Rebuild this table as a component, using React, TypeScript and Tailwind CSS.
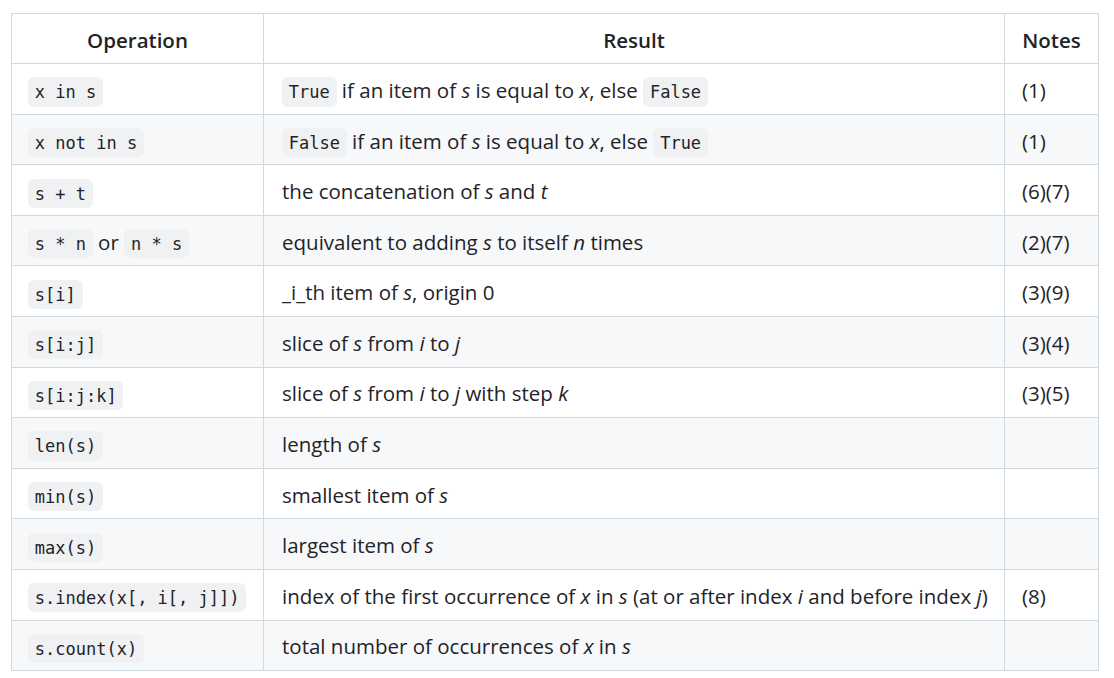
import React from 'react';

const C = ({ children }: { children: React.ReactNode }) => (
	<code className="rounded-[6px] bg-[#eff1f3] px-[6.8px] py-[4.6px] font-['DejaVu_Sans_Mono',monospace] text-[17px] text-[#1f2328]">
		{children}
	</code>
);

const I = ({ children }: { children: React.ReactNode }) => <em className="italic">{children}</em>;

type Row = { op: React.ReactNode; result: React.ReactNode; notes: string };

const rows: Row[] = [
	{
		op: <C>x in s</C>,
		result: (
			<>
				<C>True</C> if an item of <I>s</I> is equal to <I>x</I>, else <C>False</C>
			</>
		),
		notes: '(1)',
	},
	{
		op: <C>x not in s</C>,
		result: (
			<>
				<C>False</C> if an item of <I>s</I> is equal to <I>x</I>, else <C>True</C>
			</>
		),
		notes: '(1)',
	},
	{
		op: <C>s + t</C>,
		result: (
			<>
				the concatenation of <I>s</I> and <I>t</I>
			</>
		),
		notes: '(6)(7)',
	},
	{
		op: (
			<>
				<C>s * n</C> or <C>n * s</C>
			</>
		),
		result: (
			<>
				equivalent to adding <I>s</I> to itself <I>n</I> times
			</>
		),
		notes: '(2)(7)',
	},
	{
		op: <C>s[i]</C>,
		result: (
			<>
				_i_th item of <I>s</I>, origin 0
			</>
		),
		notes: '(3)(9)',
	},
	{
		op: <C>s[i:j]</C>,
		result: (
			<>
				slice of <I>s</I> from <I>i</I> to <I>j</I>
			</>
		),
		notes: '(3)(4)',
	},
	{
		op: <C>s[i:j:k]</C>,
		result: (
			<>
				slice of <I>s</I> from <I>i</I> to <I>j</I> with step <I>k</I>
			</>
		),
		notes: '(3)(5)',
	},
	{
		op: <C>len(s)</C>,
		result: (
			<>
				length of <I>s</I>
			</>
		),
		notes: '',
	},
	{
		op: <C>min(s)</C>,
		result: (
			<>
				smallest item of <I>s</I>
			</>
		),
		notes: '',
	},
	{
		op: <C>max(s)</C>,
		result: (
			<>
				largest item of <I>s</I>
			</>
		),
		notes: '',
	},
	{
		op: <C>s.index(x[, i[, j]])</C>,
		result: (
			<>
				index of the first occurrence of <I>x</I> in <I>s</I> (at or after index <I>i</I> and before index <I>j</I>)
			</>
		),
		notes: '(8)',
	},
	{
		op: <C>s.count(x)</C>,
		result: (
			<>
				total number of occurrences of <I>x</I> in <I>s</I>
			</>
		),
		notes: '',
	},
];

export default function App() {
	return (
		<div className="min-h-[678px] bg-white pl-[11px] pt-[13px] font-['Open_Sans',sans-serif] text-[20.5px] text-[#1f2328]">
			<table className="w-[1087px] table-fixed border-collapse">
				<colgroup>
					<col className="w-[252px]" />
					<col className="w-[741px]" />
					<col className="w-[94px]" />
				</colgroup>
				<thead>
					<tr className="h-[50px]">
						<th className="border border-[#d1d9e0] px-[16px] pt-[3px] text-center font-semibold">Operation</th>
						<th className="border border-[#d1d9e0] px-[16px] pt-[3px] text-center font-semibold">Result</th>
						<th className="border border-[#d1d9e0] px-[16px] pt-[3px] text-center font-semibold">Notes</th>
					</tr>
				</thead>
				<tbody>
					{rows.map((r, i) => (
						<tr key={i} className={`h-[50.6px] ${i % 2 === 1 ? 'bg-[#f6f8fa]' : 'bg-white'}`}>
							<td className="whitespace-nowrap border border-[#d1d9e0] px-[16px] pt-[3px]">{r.op}</td>
							<td className="whitespace-nowrap border border-[#d1d9e0] px-[18px] pt-[3px]">{r.result}</td>
							<td className="border border-[#d1d9e0] px-[17px] pt-[3px]">{r.notes}</td>
						</tr>
					))}
				</tbody>
			</table>
		</div>
	);
}
